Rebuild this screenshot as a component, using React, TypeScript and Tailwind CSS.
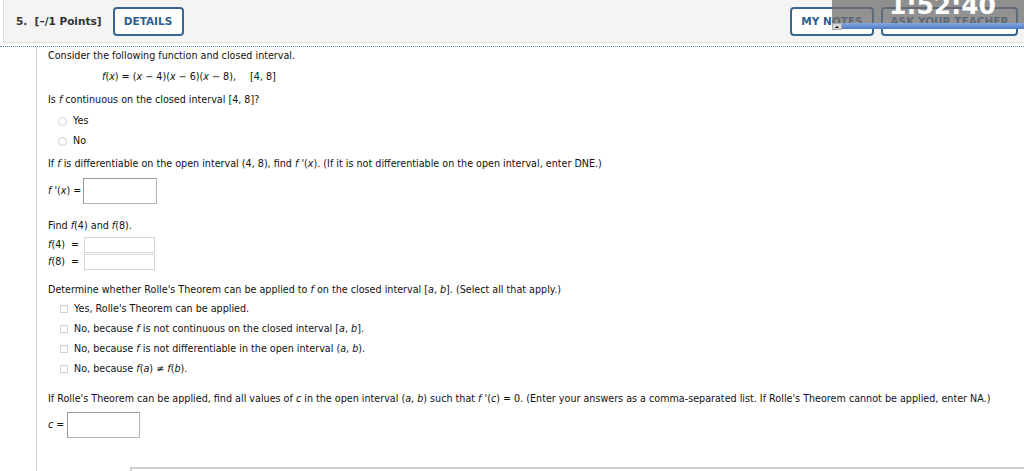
import React from 'react'

const font = { fontFamily: '"DejaVu Sans", Verdana, sans-serif' }

function I({ children }: { children: React.ReactNode }) {
  return <i className="italic">{children}</i>
}

function Radio({ label }: { label: string }) {
  return (
    <div className="flex items-center h-[20px] pl-[10px]">
      <span className="w-[9px] h-[9px] rounded-full border border-[#cfcfcf] bg-white mr-[6px]" />
      <span>{label}</span>
    </div>
  )
}

function Check({ children }: { children: React.ReactNode }) {
  return (
    <div className="flex items-center h-[20px] pl-[12px]">
      <span className="w-[8px] h-[8px] border border-[#cfcfcf] bg-white mr-[6px]" />
      <span>{children}</span>
    </div>
  )
}

function Btn({ children, w }: { children: React.ReactNode; w: string }) {
  return (
    <div
      className={`${w} h-[29px] border-2 border-[#3a6592] rounded-[4px] flex items-center justify-center whitespace-nowrap text-[10.5px] font-bold text-[#2f5f8f] bg-white`}
    >
      {children}
    </div>
  )
}

export default function App() {
  return (
    <div className="relative w-[1024px] h-[471px] bg-white overflow-hidden text-[#111]" style={font}>
      {/* header */}
      <div className="ml-[3px] h-[43px] pt-[1px] bg-[#f4f4f4] border-l border-b border-[#dcdcdc] flex items-center pl-[12px] pr-[6px]">
        <span className="text-[10.5px] font-bold text-[#333] mr-[11px] whitespace-nowrap">5.&nbsp; [–/1 Points]</span>
        <Btn w="w-[71px]">DETAILS</Btn>
        <div className="flex-1" />
        <Btn w="w-[84px]">MY NOTES</Btn>
        <div className="w-[7px]" />
        <Btn w="w-[137px]">ASK YOUR TEACHER</Btn>
      </div>
      <div className="h-[4px] border-b border-dotted border-[#3d7fd6]" />

      {/* timer overlay */}
      <div className="absolute left-[832px] top-0 w-[192px] h-[23px] bg-[#6d6d6d]/75 overflow-hidden">
        <div className="absolute left-[57px] top-[-7px] text-[25px] font-bold text-white leading-none">
          1:52:40
        </div>
      </div>
      <div className="absolute left-[842px] top-[23px] w-[182px] h-[6px] bg-gradient-to-b from-[#86aae0] to-[#4a7cc6]" />
      <div className="absolute left-[832px] top-[23px] w-[10px] h-[7px] bg-[#d8d8d8] border border-[#aaa] flex items-center justify-center">
        <span className="w-0 h-0 border-l-[2px] border-r-[2px] border-b-[2px] border-l-transparent border-r-transparent border-b-black" />
      </div>

      {/* body */}
      <div className="ml-[36px] border-l border-[#cccccc] h-[424px] pl-[11px] text-[9.6px] leading-none">
        <div className="pt-[2px] h-[15px] flex items-center">Consider the following function and closed interval.</div>
        <div className="mt-[8px] h-[14px] flex items-center pl-[54px]">
          <span><I>f</I>(<I>x</I>) = (<I>x</I> − 4)(<I>x</I> − 6)(<I>x</I> − 8),</span>
          <span className="ml-[14px]">[4, 8]</span>
        </div>
        <div className="mt-[9px] h-[14px] flex items-center">
          <span>Is <I>f</I> continuous on the closed interval [4, 8]?</span>
        </div>
        <div className="mt-[4px]">
          <Radio label="Yes" />
          <Radio label="No" />
        </div>
        <div className="mt-[6px] h-[14px] flex items-center">
          <span>
            If <I>f</I> is differentiable on the open interval (4, 8), find <I>f</I> '(<I>x</I>). (If it is not
            differentiable on the open interval, enter DNE.)
          </span>
        </div>
        <div className="mt-[7px] flex items-center h-[26px]">
          <span className="w-[35px]"><I>f</I> '(<I>x</I>) =</span>
          <div className="w-[74px] h-[26px] border border-[#b5b5b5] border-t-[#999] border-l-[#999] bg-white" />
        </div>
        <div className="mt-[15px] h-[14px] flex items-center">
          <span>Find <I>f</I>(4) and <I>f</I>(8).</span>
        </div>
        <div className="mt-[3px] flex items-center h-[17px]">
          <span className="w-[36px]"><I>f</I>(4)&nbsp; =</span>
          <div className="w-[71px] h-[16px] border border-[#d4d4d4] bg-white" />
        </div>
        <div className="flex items-center h-[17px]">
          <span className="w-[36px]"><I>f</I>(8)&nbsp; =</span>
          <div className="w-[71px] h-[16px] border border-[#d4d4d4] bg-white" />
        </div>
        <div className="mt-[13px] h-[14px] flex items-center">
          <span>
            Determine whether Rolle's Theorem can be applied to <I>f</I> on the closed interval [<I>a</I>, <I>b</I>]. (Select
            all that apply.)
          </span>
        </div>
        <div className="mt-[2px]">
          <Check>Yes, Rolle's Theorem can be applied.</Check>
          <Check>
            No, because <I>f</I> is not continuous on the closed interval [<I>a</I>, <I>b</I>].
          </Check>
          <Check>
            No, because <I>f</I> is not differentiable in the open interval (<I>a</I>, <I>b</I>).
          </Check>
          <Check>
            No, because <I>f</I>(<I>a</I>) ≠ <I>f</I>(<I>b</I>).
          </Check>
        </div>
        <div className="mt-[13px] h-[14px] flex items-center">
          <span>
            If Rolle's Theorem can be applied, find all values of <I>c</I> in the open interval (<I>a</I>, <I>b</I>) such
            that <I>f</I> '(<I>c</I>) = 0. (Enter your answers as a comma-separated list. If Rolle's Theorem cannot be
            applied, enter NA.)
          </span>
        </div>
        <div className="mt-[6px] flex items-center h-[26px]">
          <span className="w-[19px]"><I>c</I> =</span>
          <div className="w-[73px] h-[26px] border border-[#b5b5b5] border-t-[#999] border-l-[#999] bg-white" />
        </div>
      </div>
      <div className="absolute left-[130px] top-[467px] right-0 h-[10px] border-t-2 border-l-2 border-[#cfcfcf]" />
    </div>
  )
}
